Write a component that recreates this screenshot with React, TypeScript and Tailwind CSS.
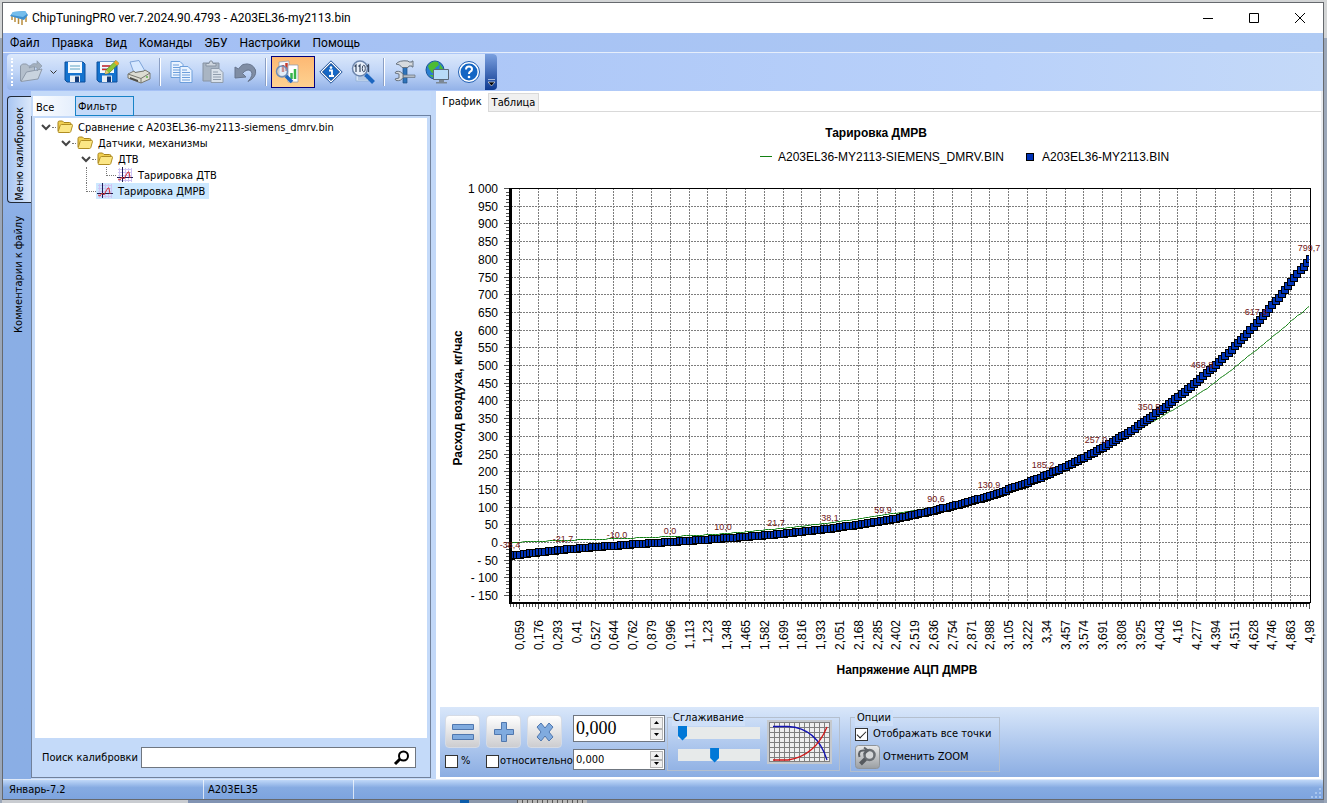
import React, { useState } from 'react';

const Y_MAX = 1000;
const Y_STEP = 50;
const POINTS = 256;
const MARK_EVERY = 17;

const X_LABELS = [
  '0,059', '0,176', '0,293', '0,41', '0,527', '0,644', '0,762', '0,879', '0,996', '1,113', '1,23',
  '1,348', '1,465', '1,582', '1,699', '1,816', '1,933', '2,051', '2,168', '2,285', '2,402', '2,519',
  '2,636', '2,754', '2,871', '2,988', '3,105', '3,222', '3,34', '3,457', '3,574', '3,691', '3,808',
  '3,925', '4,043', '4,16', '4,277', '4,394', '4,511', '4,628', '4,746', '4,863', '4,98',
];

// Every 17th point of the calibration, the rest is interpolated
const CURRENT = [-38.4, -21.7, -10, 0, 10, 21.7, 38.1, 59.9, 90.6, 130.9, 185.2, 257, 350.5, 468.8, 617.6, 799.7];
const SIEMENS = [0, 6, 11, 17, 25, 39, 56, 78, 102, 136, 186, 255, 338, 430, 546, 670];

const interpolate = (knots: number[], index: number) => {
  const i = Math.min(Math.floor(index / MARK_EVERY), knots.length - 2);
  const t = index / MARK_EVERY - i;
  const p1 = knots[i];
  const p2 = knots[i + 1];
  const p0 = knots[i - 1] ?? 2 * p1 - p2;
  const p3 = knots[i + 2] ?? 2 * p2 - p1;
  return (
    0.5 * (2 * p1 + (p2 - p0) * t + (2 * p0 - 5 * p1 + 4 * p2 - p3) * t * t + (3 * p1 - p0 - 3 * p2 + p3) * t * t * t)
  );
};

const PLOT = { left: 71, right: 870, top: 76, bottom: 490 };
const xAt = (index: number) => Math.round(PLOT.left + (index * (PLOT.right - PLOT.left)) / (POINTS - 1));
const yAt = (value: number) => Math.round(PLOT.top + ((Y_MAX - value) * 17.7) / Y_STEP);

const formatAxis = (value: number) => {
  if (value === 1000) return '1 000';
  return value < 0 ? `- ${-value}` : `${value}`;
};

const formatMark = (value: number) => value.toFixed(1).replace('.', ',');

const Chart: React.FC = () => {
  const yValues = Array.from({ length: 24 }, (_, i) => Y_MAX - i * Y_STEP);
  const indexes = Array.from({ length: POINTS }, (_, i) => i);

  return (
    <svg viewBox="0 0 879 595" className="block h-full w-full overflow-visible font-['Liberation_Sans',Arial,sans-serif] text-[12px]">
      <text x="436" y="25" textAnchor="middle" fontWeight="bold">Тарировка ДМРВ</text>
      <path d="M320 44.5h12" stroke="#138013" />
      <text x="338" y="49">A203EL36-MY2113-SIEMENS_DMRV.BIN</text>
      <rect x="586.5" y="41.5" width="7" height="7" fill="#0033b8" stroke="#000" />
      <text x="602" y="49">A203EL36-MY2113.BIN</text>

      <g stroke="#7d7d7d" strokeDasharray="2 1" shapeRendering="crispEdges">
        {yValues.slice(1).map((v) => (
          <path key={v} d={`M${PLOT.left} ${yAt(v) + 0.5}H${PLOT.right}`} />
        ))}
        {X_LABELS.slice(0, -1).map((label, i) => (
          <path key={label} d={`M${xAt(3 + i * 6) - 0.5} ${PLOT.top}V${PLOT.bottom}`} />
        ))}
      </g>

      <g stroke="#555" shapeRendering="crispEdges">
        {Array.from({ length: 116 }, (_, i) => (
          <path key={i} d={`M${i % 5 === 0 ? 64 : 66} ${yAt(Y_MAX - i * 10) + 0.5}H69`} />
        ))}
        {indexes.map((i) => (
          <path key={i} d={`M${xAt(i) - 0.5} 492v${i % 6 === 3 ? 5 : 3}`} />
        ))}
      </g>

      {yValues.map((v) => (
        <text key={v} x="58" y={yAt(v) + 5} textAnchor="end">{formatAxis(v)}</text>
      ))}
      {X_LABELS.map((label, i) => (
        <text key={label} transform={`translate(${xAt(3 + i * 6) + 4} 508) rotate(-90)`} textAnchor="end">
          {label}
        </text>
      ))}
      <text transform="translate(22 286) rotate(-90)" textAnchor="middle" fontWeight="bold">
        Расход воздуха, кг/час
      </text>
      <text x="467" y="562" textAnchor="middle" fontWeight="bold">Напряжение АЦП ДМРВ</text>

      <clipPath id="plot">
        <rect x="70" y="76" width="799" height="414" />
      </clipPath>
      <g clipPath="url(#plot)">
        <polyline
          fill="none"
          stroke="#138013"
          points={indexes.map((i) => `${xAt(i) + 0.5},${yAt(interpolate(SIEMENS, i)) + 0.5}`).join(' ')}
        />
        {indexes.map((i) => (
          <rect
            key={i}
            x={xAt(i) - 3.5}
            y={yAt(interpolate(CURRENT, i)) - 3.5}
            width="7"
            height="7"
            fill="#0033b8"
            stroke="#000"
          />
        ))}
      </g>

      <g shapeRendering="crispEdges">
        <path d="M69 76.5H870.5V491" fill="none" stroke="#000" />
        <rect x="69" y="76" width="3" height="416" />
        <rect x="69" y="490" width="801" height="2" />
      </g>

      <g className="fill-[#6e1414] text-[9px]">
        {CURRENT.map((v, i) => (
          <text key={i} x={xAt(i * MARK_EVERY) - 1} y={yAt(v) - 8} textAnchor="middle">{formatMark(v)}</text>
        ))}
      </g>
    </svg>
  );
};

const Folder: React.FC = () => (
  <svg width="16" height="16" viewBox="0 0 16 16">
    <path d="M1 12V3.500q0-1.500 1.500-1.500h3L7 3.500h5.500q1.500 0 1.500 1.500v2" fill="#f0cf50" stroke="#a8841c" />
    <path d="M4.500 5.500h10.200q1 0 .8 1l-1.700 6q-.3 1-1.300 1H2q-1 0-.8-1l2-6q.3-1 1.300-1z" fill="#fbe685" stroke="#b08d22" />
  </svg>
);

const MiniChart: React.FC = () => (
  <svg width="16" height="16" viewBox="0 0 16 16">
    <path d="M1 2.500h14M1 5.500h14M1 8.500h14M1 13.500h14M2.500 1v14M8.500 1v14M11.500 1v14M14.500 1v14" stroke="#cfc4f3" />
    <path d="M0 10.500h16M5.500 0v15" stroke="#1d1d55" />
    <path d="M1 12l2 1 2-3 2 2 2-4 2-3 1 0 1 6" fill="none" stroke="#d33030" />
  </svg>
);

const Chevron: React.FC = () => (
  <svg width="12" height="8" viewBox="0 0 12 8" className="block">
    <path d="M2 2l4 4 4-4" fill="none" stroke="#444" strokeWidth="2" />
  </svg>
);

interface TreeRowProps {
  level: string;
  label: string;
  leaf?: boolean;
  selected?: boolean;
  through?: boolean;
}

const TreeRow: React.FC<TreeRowProps> = ({ level, label, leaf, selected, through }) => (
  <li className={`relative flex h-4 items-center ${level}`}>
    {leaf ? (
      <span className="flex h-4 w-4 shrink-0 justify-end">
        <span className="h-[9px] w-[10px] self-start border-b border-l border-dotted border-[#777]" />
      </span>
    ) : (
      <>
        <button className="w-3 shrink-0" aria-label="Свернуть"><Chevron /></button>
        <span className="w-1 shrink-0 border-t border-dotted border-[#777]" />
      </>
    )}
    {through && <span className="absolute left-[51px] top-0 h-4 border-l border-dotted border-[#777]" />}
    <span className={`flex h-4 items-center gap-[5px] whitespace-nowrap pl-px pr-1 ${selected ? 'bg-[#cce8ff]' : ''}`}>
      {leaf ? <MiniChart /> : <Folder />}
      <span className="pt-px">{label}</span>
    </span>
  </li>
);

const Disk: React.FC = () => (
  <>
    <path d="M2 2h18l2 2v18H4l-2-2z" fill="#1473cf" stroke="#0d4f9a" />
    <path d="M5 2h14v11H5z" fill="#f4faff" />
    <path d="M7 6h10M7 9h10" stroke="#8fc0d8" strokeWidth="1.500" />
    <path d="M7 15.500h10V22H7z" fill="#e8eef4" />
    <path d="M12 16.500h4V22h-4z" fill="#123a78" />
  </>
);

const toolIcons = {
  open: (
    <>
      <path d="M1.500 21V6l2-2h4l2 2h6v4" fill="#b4bfcc" stroke="#8e9aaa" />
      <path d="M2 21.500L7.500 12 23 9l-4 10z" fill="#c9d3de" stroke="#8e9aaa" />
      <path d="M10 8q3-6 8-4V.8L23 6l-5 5V7.500q-4-1.500-8 .5z" fill="#a3afbd" stroke="#8592a2" strokeWidth=".6" />
    </>
  ),
  save: <Disk />,
  saveAs: (
    <>
      <Disk />
      <path d="M7 6h8M7 9.500h5" stroke="#d22c2c" strokeWidth="1.500" />
      <path d="M10 14l1-4L21 .5l3 3L14 13z" fill="#8ec63a" stroke="#5b7d1c" strokeWidth=".7" />
      <path d="M10 14l1-4 3 3z" fill="#f0c27a" />
      <path d="M21 .5l3 3-2 2-3-3z" fill="#f4a32c" />
    </>
  ),
  print: (
    <>
      <path d="M7 13L3 2l9-1.500L18 11z" fill="#d6e8ff" stroke="#7da3d8" />
      <path d="M1 14l6-3 1 1.500 9-1.500 1-1 5 3v6l-9 4-13-5z" fill="#dcdcd2" stroke="#77776f" />
      <path d="M1 14l13 4.500 9-5.500M14 18.500V23" fill="none" stroke="#77776f" />
      <path d="M3 17l8 3v2l-8-3z" fill="#4e4e4a" />
      <circle cx="20" cy="17" r="1" fill="#62b34a" />
    </>
  ),
  copy: (
    <>
      <path d="M2 1.500h9l3 3v13H2z" fill="#eaf3ff" stroke="#6c9edb" />
      <path d="M4 5h6M4 7.500h8M4 10h8M4 12.500h8M4 15h8" stroke="#6c9edb" />
      <path d="M11 6.500h8l4 4v12H11z" fill="#eaf3ff" stroke="#6c9edb" />
      <path d="M13 10h5M13 12.500h8M13 15h8M13 17.500h8M13 20h8" stroke="#6c9edb" />
    </>
  ),
  paste: (
    <>
      <path d="M2 3h16v18H2z" fill="#a9b5c3" stroke="#8793a3" />
      <path d="M5 6V3.500h3L9 1h2l1 2.500h3V6z" fill="#cfd7e0" stroke="#8793a3" />
      <path d="M10 8.500h8l4 4v10H10z" fill="#d9e1ea" stroke="#8f9cac" />
      <path d="M12 12h5M12 14.500h8M12 17h8M12 19.500h8" stroke="#8f9cac" />
    </>
  ),
  undo: (
    <path d="M2 7v11l11-1-3.500-3.500Q14 8 18 11q3 4-3 10.500 9-4.500 7.500-11.500Q19 2 10 4.500 7.500 6 5.500 9z" fill="#7f8da4" stroke="#67758d" />
  ),
  compare: (
    <>
      <path d="M4 2l10-1v15H4z" fill="#f6f8fb" stroke="#8a97ab" strokeWidth=".7" />
      <path d="M8 5v7M11.500 3v8" stroke="#c93a2b" strokeWidth="2.500" />
      <path d="M13 5h10v17H13z" fill="#fff" stroke="#8a97ab" strokeWidth=".7" />
      <path d="M16.500 13v6M20 9v10" stroke="#37b34a" strokeWidth="2.500" />
      <circle cx="7" cy="11.500" r="5.500" fill="#cfe3fa" fillOpacity=".5" stroke="#6d8db8" strokeWidth="1.500" />
      <path d="M11 16l6 6" stroke="#1d66c0" strokeWidth="3.500" />
    </>
  ),
  info: (
    <>
      <path d="M12 .8L23.200 12 12 23.200.8 12z" fill="#fff" stroke="#1c4f98" />
      <path d="M12 3.500l8.500 8.500-8.500 8.500L3.500 12z" fill="#1668c6" stroke="#103f83" />
      <path d="M10 10.500h3V16M10 16h5" fill="none" stroke="#fff" strokeWidth="1.800" />
      <circle cx="12" cy="7.600" r="1.300" fill="#fff" />
    </>
  ),
  binary: (
    <>
      <path d="M5 4h12l1 1v16H5z" fill="#d5e3f6" stroke="#8ea9cf" strokeWidth=".7" />
      <path d="M7 17h7M7 19h9" stroke="#8ea9cf" />
      <circle cx="9" cy="8.500" r="7.500" fill="#e7effa" stroke="#6d86ad" strokeWidth="1.500" />
      <path d="M3.500 6.500L5 5v7M7.500 6.500L9 5v7M16 6.500L17.500 5v7" fill="none" stroke="#3b4a63" strokeWidth="1.200" />
      <ellipse cx="12.800" cy="8.500" rx="1.500" ry="3.300" fill="none" stroke="#3b4a63" />
      <path d="M14.500 14.500l8 8" stroke="#1d66c0" strokeWidth="4" />
    </>
  ),
  tools: (
    <>
      <path d="M10 7h4v16h-4z" fill="#2f73b9" stroke="#1c4d85" strokeWidth=".7" />
      <path d="M3 4q3-4 12-3l1 1h3V1h1v6h-1V6h-3l-1 1.500H9Q7 4 3 4z" fill="#d6dade" stroke="#697481" />
      <path d="M10 15h12v2.500H10z" fill="#b4bcc5" stroke="#697481" strokeWidth=".7" />
      <path d="M2 13l1-1.500q5-1 7 3v3q-2 4-7 3L2 19l4-1v-4z" fill="#d6dade" stroke="#697481" />
    </>
  ),
  globe: (
    <>
      <circle cx="10" cy="10" r="9" fill="#2b7fd2" stroke="#1c5596" />
      <path d="M3 6q4-6 10-4l1 3-4 3 1 4-4 1-3-4zM15 4l4 6-5 1zM4 15l5 0 0 3z" fill="#4dbb34" />
      <path d="M8.500 9.500h15v10h-15z" fill="#b8dbf8" stroke="#5a6978" />
      <path d="M14 20h5v2h3v1.500H11V22h3z" fill="#7c8894" />
    </>
  ),
  help: (
    <>
      <circle cx="12" cy="12" r="10.500" fill="#fff" stroke="#1f5fb4" />
      <circle cx="12" cy="12" r="8.500" fill="#1466c4" />
      <path d="M9 9.500q0-3 3-3t3 2.700q0 1.500-1.700 2.500-1.300.8-1.300 2.300" fill="none" stroke="#fff" strokeWidth="2" />
      <circle cx="12" cy="17" r="1.300" fill="#fff" />
    </>
  ),
};

interface ToolButtonProps {
  icon: keyof typeof toolIcons;
  label: string;
}

const ToolButton: React.FC<ToolButtonProps> = ({ icon, label }) => (
  <button aria-label={label} className="flex w-8 shrink-0 items-center justify-center">
    <svg width="24" height="24" viewBox="0 0 24 24">{toolIcons[icon]}</svg>
  </button>
);

const Separator: React.FC = () => (
  <span className="flex w-[10px] shrink-0 justify-center py-1">
    <span className="w-[2px] border-l border-r border-l-[#8b9fc4] border-r-white" />
  </span>
);

interface SpinProps {
  label: string;
  large?: boolean;
}

const Spin: React.FC<SpinProps> = ({ label, large }) => {
  const [value, setValue] = useState('0,000');
  const step = (delta: number) => setValue((parseFloat(value.replace(',', '.')) + delta).toFixed(3).replace('.', ','));

  return (
    <div className={`flex w-[92px] border border-[#6f7680] bg-white p-px ${large ? 'h-[27px]' : 'h-[21px]'}`}>
      <input
        aria-label={label}
        value={value}
        onChange={(e) => setValue(e.target.value)}
        className={`min-w-0 flex-1 px-px outline-none ${large ? "font-['Liberation_Serif',serif] text-[18px]" : ''}`}
      />
      <div className="flex w-[13px] flex-col">
        {[1, -1].map((delta) => (
          <button
            key={delta}
            aria-label={delta > 0 ? 'Больше' : 'Меньше'}
            onClick={() => step(delta)}
            className="flex flex-1 items-center justify-center border border-[#b5b5b5] bg-[#f0f0f0]"
          >
            <svg width="5" height="3" viewBox="0 0 5 3">
              <path d={delta > 0 ? 'M0 3L2.500 0 5 3z' : 'M0 0l2.500 3L5 0z'} />
            </svg>
          </button>
        ))}
      </div>
    </div>
  );
};

const Slider: React.FC<{ label: string; initial: number }> = ({ label, initial }) => (
  <input
    type="range"
    aria-label={label}
    defaultValue={initial}
    className="block h-3 w-[82px] appearance-none bg-[#e7eaea] [&::-webkit-slider-thumb]:h-[15px] [&::-webkit-slider-thumb]:w-[9px] [&::-webkit-slider-thumb]:appearance-none [&::-webkit-slider-thumb]:bg-[#0078d7] [&::-webkit-slider-thumb]:[clip-path:polygon(0_0,100%_0,100%_70%,50%_100%,0_70%)]"
  />
);

const checkboxClass =
  "flex h-[13px] w-[13px] shrink-0 appearance-none items-center justify-center border border-[#333] bg-white checked:before:block checked:before:h-[9px] checked:before:w-[5px] checked:before:-translate-y-px checked:before:rotate-45 checked:before:border-b checked:before:border-r checked:before:border-[#222] checked:before:content-['']";

const operationIcons = [
  { label: 'Присвоить', path: 'M2.500 4.500h21v5h-21zM2.500 14.500h21v5h-21z' },
  { label: 'Прибавить', path: 'M10.500 2.500h5v7h7v5h-7v7h-5v-7h-7v-5h7z' },
  { label: 'Умножить', path: 'M5 7l4-4 4 5 4-5 4 4-4 5 4 5-4 4-4-5-4 5-4-4 4-5z' },
];

const App: React.FC = () => {
  const [search, setSearch] = useState('');
  const menu = ['Файл', 'Правка', 'Вид', 'Команды', 'ЭБУ', 'Настройки', 'Помощь'];

  return (
    <div className="flex h-screen flex-col bg-[linear-gradient(#d3d5d6_38px,#9ba7b9_38px)] pl-[2px] pr-[3px] pt-[2px] font-['DejaVu_Sans_Condensed','DejaVu_Sans',sans-serif] text-[11px] leading-4 text-black">
      <div className="flex min-h-0 flex-1 flex-col border border-[#66696e] bg-[#c2d8f8]">
        <header className="flex h-[30px] shrink-0 items-center bg-white pl-[7px]">
          <svg width="18" height="14" viewBox="0 0 18 14">
            <path d="M2 5v4M5 6v5M8.500 7v6M12 7v7M16 4v7" stroke="#b98d3c" strokeWidth="1.500" />
            <path d="M3 1l12-1 3 4-4 5-14-4z" fill="#3d8fcf" />
            <path d="M3 1l12-1 2 3-4 3L1 4z" fill="#74bdec" />
          </svg>
          <h1 className="ml-1 flex-1 font-['Roboto',sans-serif] text-[12px]">ChipTuningPRO ver.7.2024.90.4793 - A203EL36-my2113.bin</h1>
          <button aria-label="Свернуть окно" className="flex h-full w-[46px] items-center justify-center">
            <svg width="10" height="10"><path d="M0 5.500h10" stroke="#000" /></svg>
          </button>
          <button aria-label="Развернуть окно" className="flex h-full w-[46px] items-center justify-center">
            <svg width="10" height="10"><path d="M.5.5h9v9h-9z" fill="none" stroke="#000" /></svg>
          </button>
          <button aria-label="Закрыть" className="flex h-full w-[46px] items-center justify-center">
            <svg width="10" height="10"><path d="M0 0l10 10M10 0L0 10" stroke="#000" /></svg>
          </button>
        </header>

        <nav className="flex h-5 shrink-0 items-center gap-3 border-b border-[#e6eefb] bg-gradient-to-r from-[#a2bef4] to-[#b0cbf4] pl-[7px] font-['Roboto',sans-serif] text-[12px]">
          {menu.map((item) => (
            <button key={item}>{item}</button>
          ))}
        </nav>

        <div className="flex h-[38px] shrink-0 items-start bg-gradient-to-r from-[#a2bef4] via-[#b9d1fa] via-75% to-[#c4d9f8] pl-1 pt-px">
          <div role="toolbar" className="flex h-9 items-stretch rounded bg-gradient-to-b from-[#dbe8fb] via-[#c0d5f7] to-[#93b2e8]">
            <span className="my-1 ml-1 mr-[2px] w-[2px] border-l-2 border-dotted border-white" />
            <ToolButton icon="open" label="Открыть" />
            <button aria-label="Недавние файлы" className="flex w-3 items-center justify-center">
              <svg width="7" height="5"><path d="M.5.5l3 3 3-3" fill="none" stroke="#333" /></svg>
            </button>
            <ToolButton icon="save" label="Сохранить" />
            <ToolButton icon="saveAs" label="Сохранить как" />
            <ToolButton icon="print" label="Печать" />
            <Separator />
            <ToolButton icon="copy" label="Копировать" />
            <ToolButton icon="paste" label="Вставить" />
            <ToolButton icon="undo" label="Отменить" />
            <Separator />
            <button aria-label="Сравнение" aria-pressed="true" className="my-[2px] flex w-11 items-center border border-[#000080] bg-gradient-to-b from-[#fdb873] to-[#fdd291] pl-[3px]">
              <svg width="24" height="24" viewBox="0 0 24 24">{toolIcons.compare}</svg>
            </button>
            <ToolButton icon="info" label="Информация" />
            <ToolButton icon="binary" label="Просмотр" />
            <Separator />
            <ToolButton icon="tools" label="Инструменты" />
            <ToolButton icon="globe" label="Сеть" />
            <ToolButton icon="help" label="Справка" />
            <button aria-label="Настроить панель" className="flex w-3 items-end justify-center rounded-r bg-gradient-to-b from-[#7ba0df] to-[#0e3a91] pb-1">
              <svg width="7" height="7"><path d="M0 .5h7M0 3h7L3.500 7z" fill="#000" stroke="#fff" strokeWidth=".6" /></svg>
            </button>
          </div>
        </div>

        <main className="flex min-h-0 flex-1">
          <div role="tablist" aria-label="Разделы" className="flex w-7 shrink-0 flex-col bg-gradient-to-b from-[#a2bef4] via-[#8aaee5] via-20% to-[#8aaee5] pl-1 pt-[5px]">
            <button role="tab" aria-selected="true" className="flex h-[107px] w-6 items-center justify-center rounded-l border border-r-0 border-[#222a38] bg-gradient-to-r from-[#a9c6f2] to-[#dbe8fa] pt-2">
              <span className="rotate-180 whitespace-nowrap [writing-mode:vertical-rl]">Меню калибровок</span>
            </button>
            <button role="tab" aria-selected="false" className="flex h-[142px] w-6 items-center justify-center">
              <span className="rotate-180 whitespace-nowrap [writing-mode:vertical-rl]">Комментарии к файлу</span>
            </button>
          </div>

          <section className="flex w-[400px] shrink-0 flex-col bg-[#c4daf9] pb-px pt-[5px]">
            <div role="tablist" aria-label="Калибровки" className="flex h-5 items-stretch pl-[2px]">
              <button role="tab" aria-selected="true" className="w-[42px] bg-gradient-to-r from-[#fdfeff] to-[#e4eefc] pl-[3px] pt-1 text-left">Все</button>
              <button role="tab" aria-selected="false" className="w-[59px] border border-[#1883c7] pl-[2px] pt-px text-left">Фильтр</button>
              <span className="flex-1 border-b border-[#6d82a3]" />
            </div>
            <div className="flex min-h-0 flex-1 flex-col border-x border-b border-[#71819b] px-[3px] pt-[2px]">
              <ul className="min-h-0 flex-1 bg-white pt-px">
                <TreeRow level="pl-[5px]" label="Сравнение с A203EL36-my2113-siemens_dmrv.bin" />
                <TreeRow level="pl-[25px]" label="Датчики, механизмы" />
                <TreeRow level="pl-[45px]" label="ДТВ" />
                <TreeRow level="pl-[65px]" label="Тарировка ДТВ" leaf through />
                <TreeRow level="pl-[45px]" label="Тарировка ДМРВ" leaf selected />
              </ul>
              <div className="flex h-[39px] shrink-0 items-center gap-[3px] pl-[7px] pr-[11px]">
                <label htmlFor="search">Поиск калибровки</label>
                <div className="flex h-[21px] flex-1 items-center border border-[#6f7680] bg-white pr-1">
                  <input id="search" value={search} onChange={(e) => setSearch(e.target.value)} className="min-w-0 flex-1 px-1 outline-none" />
                  <button aria-label="Найти">
                    <svg width="18" height="16" viewBox="0 0 18 16">
                      <circle cx="10.500" cy="6" r="4.500" fill="none" stroke="#000" strokeWidth="2" />
                      <path d="M7 9l-5 5" stroke="#000" strokeWidth="3" />
                    </svg>
                  </button>
                </div>
              </div>
            </div>
          </section>

          <section className="ml-[5px] flex min-w-0 flex-1 flex-col border-r-2 border-[#e8ebef] bg-white pb-[2px]">
            <div role="tablist" aria-label="Вид данных" className="flex h-[21px] shrink-0">
              <button role="tab" aria-selected="true" className="w-[52px]">График</button>
              <button role="tab" aria-selected="false" className="mt-[2px] w-[51px] border border-[#d9d9d9] bg-[#f0f0f0]">Таблица</button>
              <span className="flex-1 border-b border-[#d9d9d9]" />
            </div>
            <div className="min-h-0 flex-1 pl-1 pr-[2px]">
              <Chart />
            </div>

            <div className="ml-1 mr-[2px] flex h-[70px] shrink-0 items-start bg-gradient-to-b from-[#d9e7fa] to-[#8bade2] pl-[5px] pt-2">
              <div className="grid grid-cols-[41px_87px] gap-y-[5px]">
                <div className="col-span-2 flex gap-[6px]">
                  {operationIcons.map(({ label, path }) => (
                    <button
                      key={label}
                      aria-label={label}
                      className="flex h-[33px] w-[35px] items-center justify-center rounded border border-[#d5dbe5] bg-gradient-to-b from-white to-[#cdcdd0]"
                    >
                      <svg width="26" height="24" viewBox="0 0 26 24">
                        <path d={path} fill="#80abdf" stroke="#5077ae" />
                      </svg>
                    </button>
                  ))}
                </div>
                <label className="flex items-center gap-[3px]"><input type="checkbox" className={checkboxClass} />%</label>
                <label className="flex items-center gap-px"><input type="checkbox" className={checkboxClass} />относительно</label>
              </div>
              <div className="flex flex-col gap-[7px]">
                <Spin label="Значение" large />
                <Spin label="Относительное значение" />
              </div>

              <fieldset className="relative ml-[2px] mt-[2px] flex h-[54px] w-[173px] gap-[7px] border border-[#b4bfce] pl-[10px]">
                <legend className="absolute -top-2 left-1 bg-[#cfe0f8] px-px">Сглаживание</legend>
                <div className="flex flex-col gap-[10px] pt-[9px]">
                  <Slider label="Радиус сглаживания" initial={0} />
                  <Slider label="Сила сглаживания" initial={44} />
                </div>
                <button aria-label="Сгладить" className="mt-[2px] h-[44px] w-[65px] border-2 border-[#c5c9ce] bg-[#eee]">
                  <svg width="61" height="40" viewBox="0 0 61 40">
                    <path
                      d="M.5 0v40M5.500 0v40M10.500 0v40M15.500 0v40M20.500 0v40M25.500 0v40M30.500 0v40M35.500 0v40M40.500 0v40M45.500 0v40M50.500 0v40M55.500 0v40M60.500 0v40M0 .5h61M0 5.500h61M0 10.500h61M0 15.500h61M0 20.500h61M0 25.500h61M0 30.500h61M0 35.500h61M0 39.500h61"
                      stroke="#7f7f7f"
                    />
                    <path d="M4 4.500h15Q48 6 58 38" fill="none" stroke="#1212b4" strokeWidth="1.300" />
                    <path d="M4 38h15Q46 34 58 5" fill="none" stroke="#d21616" strokeWidth="1.300" />
                  </svg>
                </button>
              </fieldset>

              <fieldset className="relative ml-[10px] mt-[2px] flex h-[55px] w-[150px] flex-col gap-[3px] border border-[#b4bfce] pl-1 pt-2">
                <legend className="absolute -top-2 left-1 bg-[#cfe0f8] px-[2px]">Опции</legend>
                <label className="flex items-center gap-[5px] whitespace-nowrap">
                  <input type="checkbox" defaultChecked className={checkboxClass} />
                  Отображать все точки
                </label>
                <button className="flex items-center gap-[3px] whitespace-nowrap">
                  <svg width="25" height="24" viewBox="0 0 25 24">
                    <defs>
                      <linearGradient id="steel" x2="0" y2="1">
                        <stop stopColor="#e9eaeb" />
                        <stop offset="1" stopColor="#9a9ea2" />
                      </linearGradient>
                    </defs>
                    <rect x=".5" y=".5" width="24" height="23" rx="3" fill="url(#steel)" stroke="#8f9499" />
                    <circle cx="14.500" cy="10" r="5" fill="#d4d6d8" stroke="#6a6e73" strokeWidth="2.500" />
                    <path d="M10.500 14l-5 5" stroke="#55595e" strokeWidth="4" />
                    <path d="M4.500 12Q2.500 5 9 5.500h2M9 2.500l4 3-4 3.500" fill="none" stroke="#5d6166" strokeWidth="2" />
                  </svg>
                  Отменить ZOOM
                </button>
              </fieldset>
            </div>
          </section>
        </main>

        <footer className="flex h-5 shrink-0 items-stretch border-t border-[#dfe9f8] bg-gradient-to-b from-[#c0d8f8] via-[#86abe2] via-40% to-[#7da4df] pl-[2px]">
          <span className="w-[199px] border-r border-white/70 pl-1 pt-[2px]">Январь-7.2</span>
          <span className="w-[150px] border-r border-white/70 pl-1 pt-[2px]">A203EL35</span>
          <svg className="ml-auto self-end" width="13" height="13" viewBox="0 0 13 13">
            <path d="M9 2h2v2H9zM9 6h2v2H9zM5 6h2v2H5zM9 10h2v2H9zM5 10h2v2H5zM1 10h2v2H1z" fill="#a9c6ee" />
          </svg>
        </footer>
      </div>

      {/* Sliver of the window behind */}
      <div aria-hidden="true" className="flex h-[3px] shrink-0 bg-[#8a97ac]">
        <span className="w-[186px] bg-[#c9ccd1]" />
        <span className="w-[272px] bg-[#8193b3]" />
        <span className="w-[9px] bg-[#0b5cab]" />
        <span className="w-[48px] bg-[#8a97ac]" />
        <span className="w-[70px] bg-[repeating-linear-gradient(90deg,#555_0_1px,#b5b5b5_1px_5px)]" />
      </div>
    </div>
  );
};

export default App;
